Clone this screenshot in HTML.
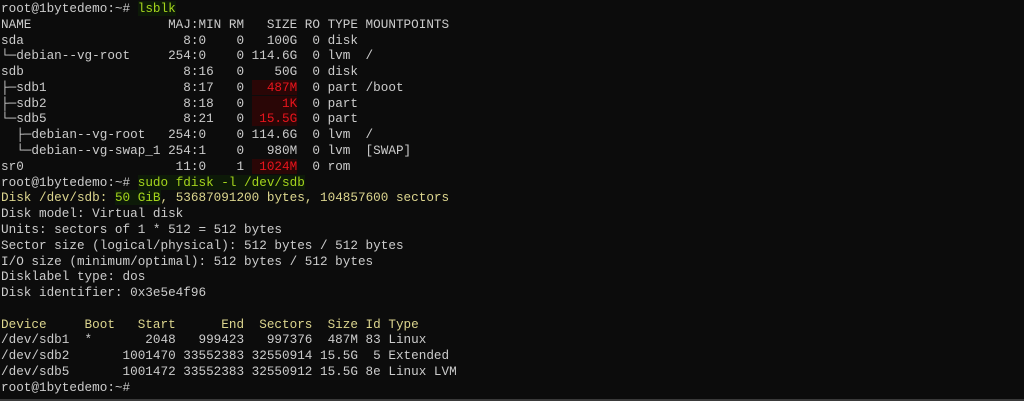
<!DOCTYPE html>
<html><head><style>
html,body{margin:0;padding:0;background:#0c0c0c;width:1024px;height:401px;overflow:hidden}
pre{margin:0;position:absolute;left:1px;top:1px;font-family:"Liberation Mono",monospace;font-size:12.67px;line-height:15.78px;color:#cccccc;white-space:pre}
.g{color:#a4d51c;background:#0d1a08}
.r{color:#e8141c;background:#2a0606}
.y{color:#dcd58e}
.bar{position:absolute;left:0;bottom:0;width:1024px;height:2px;background:#3a3a3a}
</style></head><body>
<pre>root@1bytedemo:~# <span class="g">lsblk</span>
NAME                  MAJ:MIN RM   SIZE RO TYPE MOUNTPOINTS
sda                     8:0    0   100G  0 disk
└─debian--vg-root     254:0    0 114.6G  0 lvm  /
sdb                     8:16   0    50G  0 disk
├─sdb1                  8:17   0 <span class="r">  487M</span>  0 part /boot
├─sdb2                  8:18   0 <span class="r">    1K</span>  0 part
└─sdb5                  8:21   0 <span class="r"> 15.5G</span>  0 part
  ├─debian--vg-root   254:0    0 114.6G  0 lvm  /
  └─debian--vg-swap_1 254:1    0   980M  0 lvm  [SWAP]
sr0                    11:0    1 <span class="r"> 1024M</span>  0 rom
root@1bytedemo:~# <span class="g">sudo fdisk -l /dev/sdb</span>
<span class="y">Disk /dev/sdb: </span><span class="g">50 GiB</span><span class="y">, 53687091200 bytes, 104857600 sectors</span>
Disk model: Virtual disk
Units: sectors of 1 * 512 = 512 bytes
Sector size (logical/physical): 512 bytes / 512 bytes
I/O size (minimum/optimal): 512 bytes / 512 bytes
Disklabel type: dos
Disk identifier: 0x3e5e4f96

<span class="y">Device     Boot   Start      End  Sectors  Size Id Type</span>
/dev/sdb1  *       2048   999423   997376  487M 83 Linux
/dev/sdb2       1001470 33552383 32550914 15.5G  5 Extended
/dev/sdb5       1001472 33552383 32550912 15.5G 8e Linux LVM
root@1bytedemo:~#</pre>
<div class="bar"></div>
</body></html>
